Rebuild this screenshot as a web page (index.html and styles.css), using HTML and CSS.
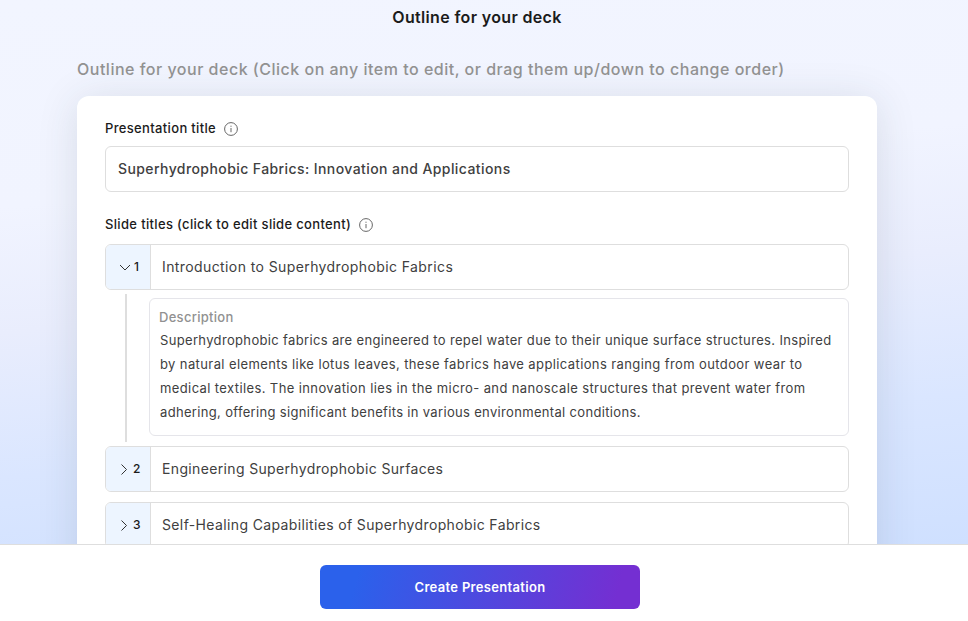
FILE: index.html
```html
<!DOCTYPE html>
<html lang="en">
<head>
    <meta charset="UTF-8">
    <meta name="viewport" content="width=device-width, initial-scale=1.0">
    <title>Outline for your deck</title>
    <link rel="stylesheet" href="styles.css">
</head>
<body>
    <main class="content">
        <h1 class="page-title">Outline for your deck</h1>
        <h2 class="page-hint">Outline for your deck (Click on any item to edit, or drag them up/down to change order)</h2>

        <section class="card">
            <div class="label label-title">
                <span>Presentation title</span>
                <svg class="info" viewBox="0 0 14 14"><circle cx="7" cy="7" r="6.4"/><path d="M7 6v4.2M7 3.7v1.1"/></svg>
            </div>
            <div class="title-input">Superhydrophobic Fabrics: Innovation and Applications</div>

            <div class="label label-slides">
                <span>Slide titles (click to edit slide content)</span>
                <svg class="info" viewBox="0 0 14 14"><circle cx="7" cy="7" r="6.4"/><path d="M7 6v4.2M7 3.7v1.1"/></svg>
            </div>

            <div class="slide">
                <div class="slide-number open">
                    <svg class="chevron" viewBox="0 0 12 12"><path d="M1 4l5 5 5-5"/></svg>1
                </div>
                <div class="slide-name name-1">Introduction to Superhydrophobic Fabrics</div>
            </div>

            <div class="details">
                <div class="description">
                    <h3>Description</h3>
                    <p>
                        <span class="line-1">Superhydrophobic fabrics are engineered to repel water due to their unique surface structures. Inspired</span><br>
                        <span class="line-2">by natural elements like lotus leaves, these fabrics have applications ranging from outdoor wear to</span><br>
                        <span class="line-3">medical textiles. The innovation lies in the micro- and nanoscale structures that prevent water from</span><br>
                        <span class="line-4">adhering, offering significant benefits in various environmental conditions.</span>
                    </p>
                </div>
            </div>

            <div class="slide">
                <div class="slide-number">
                    <svg class="chevron" viewBox="0 0 12 12"><path d="M3.5 1.5l5 5-5 5"/></svg>2
                </div>
                <div class="slide-name name-2">Engineering Superhydrophobic Surfaces</div>
            </div>

            <div class="slide">
                <div class="slide-number">
                    <svg class="chevron" viewBox="0 0 12 12"><path d="M3.5 1.5l5 5-5 5"/></svg>3
                </div>
                <div class="slide-name name-3">Self-Healing Capabilities of Superhydrophobic Fabrics</div>
            </div>
        </section>
    </main>

    <footer class="footer">
        <button class="create">Create Presentation</button>
    </footer>
</body>
</html>
```
FILE: styles.css
```css
* {
    box-sizing: border-box;
}
body {
    margin: 0;
    height: 621px;
    display: flex;
    flex-direction: column;
    overflow: hidden;
    font-family: Inter, sans-serif;
    color: #404040;
    background: #fff;
}
.content {
    height: 544px;
    overflow: hidden;
    padding: 5px 91px 0 77px;
    background: linear-gradient(175deg, #f2f5ff 0%, #f1f4ff 33%, #e9edfd 53%, #dae6ff 76%, #cfe0ff 100%);
}
.page-title {
    margin: 0;
    font-size: 16px;
    font-weight: 600;
    line-height: 24px;
    letter-spacing: 0.34px;
    text-align: center;
    color: #1b1b1b;
}
.page-hint {
    margin: 28px 0 0;
    font-size: 16px;
    font-weight: 500;
    line-height: 24px;
    letter-spacing: 0.5px;
    white-space: nowrap;
    color: #919191;
}
.card {
    height: 600px;
    margin-top: 15px;
    padding: 22px 28px;
    border-radius: 12px;
    background: #fff;
    box-shadow: 0 4px 40px rgba(50, 65, 70, 0.13);
}
.label {
    display: flex;
    align-items: center;
    gap: 8px;
    height: 20px;
    font-size: 13px;
    font-weight: 500;
    letter-spacing: 0.34px;
    color: #1b1b1b;
}
.label-slides {
    margin-top: 22px;
}
.info {
    width: 14px;
    height: 14px;
    margin-top: 2px;
    fill: none;
    stroke: #666;
    stroke-width: 1;
}
.title-input {
    display: flex;
    align-items: center;
    height: 46px;
    margin-top: 8px;
    padding: 0 12px 2px;
    border: 1px solid #dedede;
    border-radius: 6px;
    font-size: 14px;
    font-weight: 500;
    letter-spacing: 0.415px;
}
.slide {
    display: flex;
    height: 46px;
    margin-top: 10px;
    border: 1px solid #dedede;
    border-radius: 6px;
    overflow: hidden;
}
.slide-number {
    display: flex;
    align-items: center;
    gap: 3px;
    width: 45px;
    padding: 0 0 1px 12px;
    border-right: 1px solid #dedede;
    background: #edf5ff;
    font-size: 12px;
    font-weight: 500;
    color: #1b1b1b;
}
.slide-number.open {
    padding-left: 13px;
}
.chevron {
    width: 12px;
    height: 12px;
    fill: none;
    stroke: #333;
    stroke-width: 1;
}
.slide-name {
    display: flex;
    align-items: center;
    padding: 0 0 1px 11px;
    font-size: 14px;
}
.name-1 {
    letter-spacing: 0.4px;
}
.name-2 {
    letter-spacing: 0.35px;
}
.name-3 {
    letter-spacing: 0.365px;
}
.details {
    margin: 4px 0 0 20px;
    padding: 4px 0 6px 22px;
    border-left: 2px solid #dedede;
}
.description {
    height: 138px;
    padding: 8px 9px 0;
    border: 1px solid #e5e5ea;
    border-radius: 6px;
}
.description h3 {
    margin: 0;
    font-size: 13px;
    font-weight: 500;
    line-height: 20px;
    letter-spacing: 0.29px;
    color: #919191;
}
.description p {
    margin: 1px 0 0 1px;
    font-size: 13px;
    line-height: 24px;
    white-space: nowrap;
}
.line-1 {
    letter-spacing: 0.342px;
}
.line-2 {
    letter-spacing: 0.393px;
}
.line-3 {
    letter-spacing: 0.388px;
}
.line-4 {
    letter-spacing: 0.33px;
}
.details + .slide {
    margin-top: 4px;
}
.footer {
    flex: 1;
    display: flex;
    justify-content: center;
    align-items: flex-start;
    padding: 20px 8px 0 0;
    border-top: 1px solid #dedede;
}
.create {
    width: 320px;
    height: 44px;
    padding: 0 0 1px;
    border: none;
    border-radius: 6px;
    background: linear-gradient(105deg, #2b61eb 12%, #742fd2 92%);
    font-family: inherit;
    font-size: 13px;
    font-weight: 600;
    letter-spacing: 0.32px;
    color: #fff;
}
```
